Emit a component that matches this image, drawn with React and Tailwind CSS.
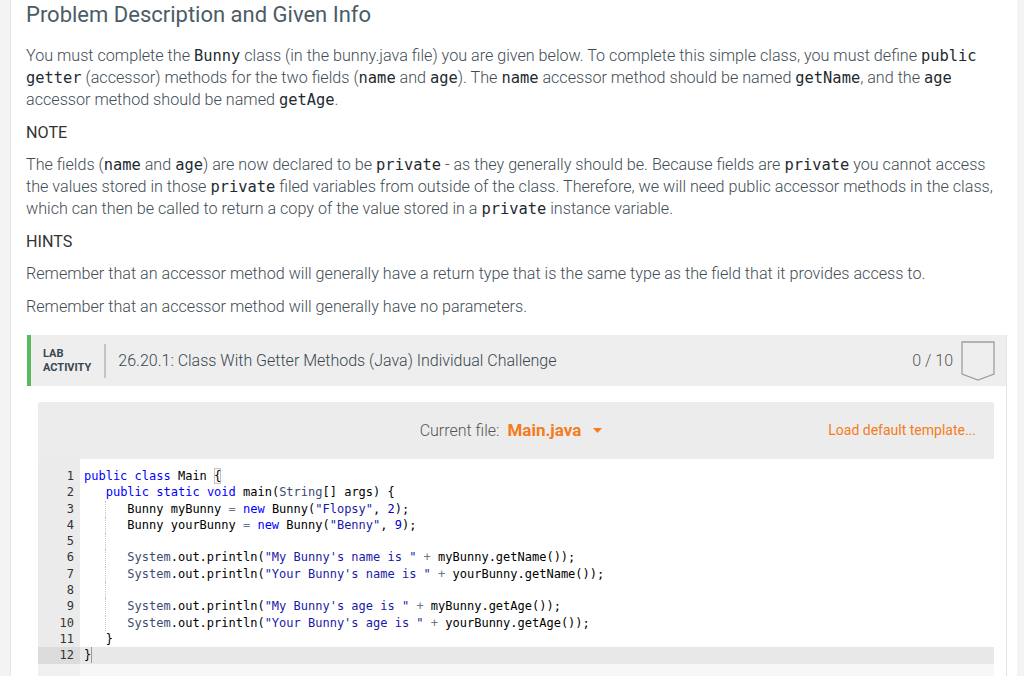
import React from 'react';

const KW = 'text-[#0000ff]';
const STR = 'text-[#1a1aa6]';
const NUM = 'text-[#0000cd]';
const OP = 'text-[#687687]';
const SUP = 'text-[#3c4c72]';

// each code line: indent level (in 3-space steps) + tokens [text, className]
const CODE = [
  { indent: 0, tokens: [['public', KW], [' '], ['class', KW], [' Main '], ['{', 'bracket']] },
  { indent: 1, tokens: [['public', KW], [' '], ['static', KW], [' '], ['void', KW], [' main('], ['String', SUP], ['[] args) {']] },
  { indent: 2, tokens: [['Bunny myBunny '], ['=', OP], [' '], ['new', KW], [' Bunny('], ['"Flopsy"', STR], [', '], ['2', NUM], [');']] },
  { indent: 2, tokens: [['Bunny yourBunny '], ['=', OP], [' '], ['new', KW], [' Bunny('], ['"Benny"', STR], [', '], ['9', NUM], [');']] },
  { indent: 2, tokens: [] },
  { indent: 2, tokens: [['System', SUP], ['.out.println('], ['"My Bunny\'s name is "', STR], [' '], ['+', OP], [' myBunny.getName());']] },
  { indent: 2, tokens: [['System', SUP], ['.out.println('], ['"Your Bunny\'s name is "', STR], [' '], ['+', OP], [' yourBunny.getName());']] },
  { indent: 2, tokens: [] },
  { indent: 2, tokens: [['System', SUP], ['.out.println('], ['"My Bunny\'s age is "', STR], [' '], ['+', OP], [' myBunny.getAge());']] },
  { indent: 2, tokens: [['System', SUP], ['.out.println('], ['"Your Bunny\'s age is "', STR], [' '], ['+', OP], [' yourBunny.getAge());']] },
  { indent: 1, tokens: [['}']] },
  { indent: 0, tokens: [['}']], active: true },
];

function Mono({ children }) {
  return (
    <code className="font-['DejaVu_Sans_Mono',monospace] text-[15.4px] font-normal text-[#1e2a30]">
      {children}
    </code>
  );
}

function CodeLine({ line }) {
  return (
    <>
      {line.indent === 2 && (
        <>
          <span className="inline-block w-[3ch] h-[16px] align-top border-r border-dotted border-[#c8c8c8]">{'   '}</span>
          <span>{'   '}</span>
        </>
      )}
      {line.indent === 1 && <span>{'   '}</span>}
      {line.tokens.map(([text, cls], i) =>
        cls === 'bracket' ? (
          <span key={i} className="inline-block h-[16px] align-top shadow-[inset_0_0_0_1px_#c0c0c0]">{text}</span>
        ) : (
          <span key={i} className={cls}>{text}</span>
        )
      )}
      {line.active && <span className="inline-block w-0 h-[16px] align-top border-l border-[#999]" />}
    </>
  );
}

function Editor() {
  return (
    <div className="font-['DejaVu_Sans_Mono',monospace] text-[12px] leading-[16.3px] text-black">
      <div className="flex h-[9px]">
        <div className="w-[42px] bg-[#ebebeb]" />
        <div className="flex-1 bg-white" />
      </div>
      {CODE.map((line, i) => (
        <div key={i} className="flex h-[16.3px]">
          <div className={`w-[42px] pr-[6px] text-right text-[#333] ${line.active ? 'bg-[#dcdcdc]' : 'bg-[#ebebeb]'}`}>
            {i + 1}
          </div>
          <div className={`flex-1 pl-[4px] whitespace-pre ${line.active ? 'bg-[#e8e8e8]' : 'bg-white'}`}>
            <CodeLine line={line} />
          </div>
        </div>
      ))}
      <div className="flex h-[16px]">
        <div className="w-[42px] bg-[#f0f0f0]" />
        <div className="flex-1 bg-[#f7f7f7]" />
      </div>
    </div>
  );
}

function ScoreBox() {
  return (
    <svg width="34" height="40" viewBox="0 0 34 40">
      <path d="M1 1 H33 V33 L17 39 L1 33 Z" fill="none" stroke="#9e9e9e" strokeWidth="1.3" />
    </svg>
  );
}

export default function App() {
  return (
    <div className="h-[676px] overflow-hidden bg-[#f3f3f3] flex font-['Roboto',sans-serif]">
      <div className="ml-[10px] w-[1007px] bg-white border-l border-[#e6e6e6] pl-[15px] pr-[10px] text-[16.15px] text-[#3f4d55]">
        <h1 className="text-[22px] leading-[30px] text-[#4a5c66] font-normal">Problem Description and Given Info</h1>

        <p className="mt-[15px] leading-[22px] font-light whitespace-nowrap">
          You must complete the <Mono>Bunny</Mono> class (in the bunny.java file) you are given below. To complete this simple class, you must define <Mono>public</Mono>
          <br />
          <Mono>getter</Mono> (accessor) methods for the two fields (<Mono>name</Mono> and <Mono>age</Mono>). The <Mono>name</Mono> accessor method should be named <Mono>getName</Mono>, and the <Mono>age</Mono>
          <br />
          accessor method should be named <Mono>getAge</Mono>.
        </p>

        <h2 className="mt-[11px] leading-[22px] text-[#333]">NOTE</h2>

        <p className="mt-[10px] leading-[22px] font-light whitespace-nowrap">
          The fields (<Mono>name</Mono> and <Mono>age</Mono>) are now declared to be <Mono>private</Mono> - as they generally should be. Because fields are <Mono>private</Mono> you cannot access
          <br />
          the values stored in those <Mono>private</Mono> filed variables from outside of the class. Therefore, we will need public accessor methods in the class,
          <br />
          which can then be called to return a copy of the value stored in a <Mono>private</Mono> instance variable.
        </p>

        <h2 className="mt-[11px] leading-[22px] text-[#333]">HINTS</h2>

        <p className="mt-[10px] leading-[22px] font-light">
          Remember that an accessor method will generally have a return type that is the same type as the field that it provides access to.
        </p>
        <p className="mt-[11px] leading-[22px] font-light">
          Remember that an accessor method will generally have no parameters.
        </p>

        <div className="mt-[17px] ml-[1px] border-r border-[#e4e4e4]">
          <div className="h-[51px] bg-[#eeeeee] border-l-4 border-[#5cb85c] flex items-center pl-[12px] pr-[11px]">
            <div className="text-[11px] leading-[14px] font-bold text-[#37474f]">
              LAB
              <br />
              ACTIVITY
            </div>
            <div className="ml-[13px] w-[2px] h-[34px] bg-[#c4c4c4]" />
            <div className="ml-[12px] flex-1 text-[16px] text-[#37474f] font-light">
              26.20.1: Class With Getter Methods (Java) Individual Challenge
            </div>
            <div className="text-[16px] text-[#555] font-light mr-[8px]">0 / 10</div>
            <ScoreBox />
          </div>

          <div className="pt-[16px] pl-[11px] pr-[12px]">
            <div className="bg-[#ececec] rounded-t-[2px]">
              <div className="h-[57px] flex items-center relative px-[18px]">
                <div className="flex-1 flex items-center justify-center pr-[10px]">
                  <span className="text-[16px] text-[#555] font-light">Current file:</span>
                  <span className="ml-[8px] text-[17px] font-bold text-[#f47c20]">Main.java</span>
                  <svg className="ml-[12px]" width="9" height="6" viewBox="0 0 9 6">
                    <path d="M0 0 H9 L4.5 5 Z" fill="#f47c20" />
                  </svg>
                </div>
                <span className="absolute right-[18px] text-[14px] text-[#f47c20]">Load default template...</span>
              </div>
              <Editor />
            </div>
          </div>
        </div>
      </div>
    </div>
  );
}
